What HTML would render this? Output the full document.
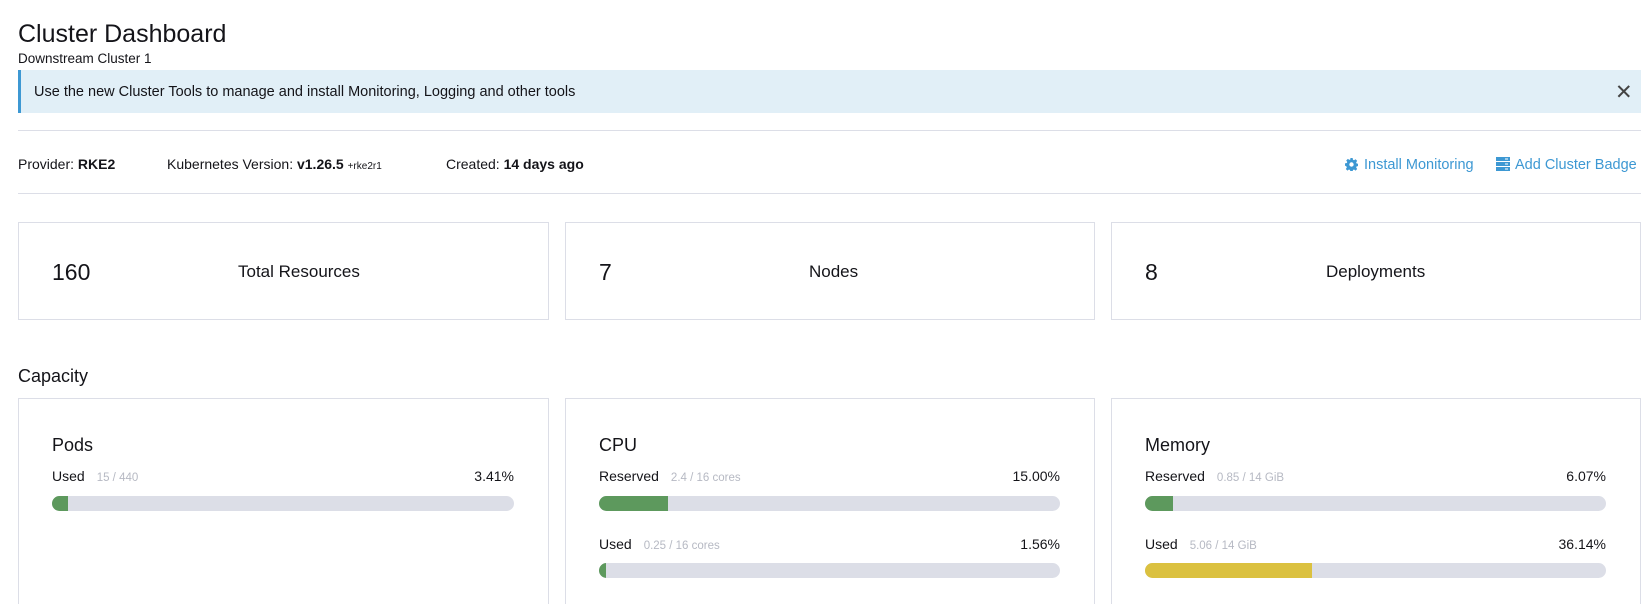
<!DOCTYPE html>
<html><head><meta charset="utf-8"><style>
*{box-sizing:border-box;margin:0;padding:0}
html,body{width:1645px;height:604px;overflow:hidden}
body{background:#fff;font-family:"Liberation Sans",sans-serif;color:#141419;position:relative}
.a{position:absolute;white-space:nowrap}
.card{position:absolute;border:1px solid #dcdee7;background:#fff}
.cap{height:206px;border-bottom:none}
.bar{position:absolute;height:15px;border-radius:8px;background:#dcdee7;overflow:hidden}
.bar i{position:absolute;left:0;top:0;bottom:0;background:#5d995d}
.lbl{font-size:14px;color:#141419}
.sub{font-size:11.5px;color:#b6b9c3;margin-left:12px}
.pct{font-size:14px;text-align:right}
.blue{color:#3d98d3}
</style></head><body>
<div class="a" style="left:18px;top:20px;font-size:25px">Cluster Dashboard</div>
<div class="a" style="left:18px;top:51px;font-size:13.5px">Downstream Cluster 1</div>
<div class="a" style="left:18px;top:70px;width:1623px;height:43px;background:#e1eff7;border-left:3px solid #3d98d3"></div>
<div class="a" style="left:34px;top:84px;font-size:14.5px">Use the new Cluster Tools to manage and install Monitoring, Logging and other tools</div>
<div class="a" style="left:1615px;top:80px;font-size:21px;color:#444">✕</div>
<div class="a" style="left:18px;top:130px;width:1623px;height:1px;background:#dcdee7"></div>
<div class="a" style="left:18px;top:156px;font-size:14px">Provider: <b>RKE2</b></div>
<div class="a" style="left:167px;top:156px;font-size:14px">Kubernetes Version: <b>v1.26.5</b> <b style="font-size:10px;font-weight:normal">+rke2r1</b></div>
<div class="a" style="left:446px;top:156px;font-size:14px">Created: <b>14 days ago</b></div>
<svg class="a" style="left:1345px;top:158px" width="13" height="13" viewBox="0 0 16 16"><path fill="#3d98d3" d="M6.6 0h2.8l.4 2.2 1.3.6 1.9-1.3 2 2-1.3 1.9.6 1.3 2.2.4v2.8l-2.2.4-.6 1.3 1.3 1.9-2 2-1.9-1.3-1.3.6-.4 2.2H6.6l-.4-2.2-1.3-.6-1.9 1.3-2-2 1.3-1.9-.6-1.3L0 9.4V6.6l2.2-.4.6-1.3-1.3-1.9 2-2 1.9 1.3 1.3-.6zM8 5.3A2.7 2.7 0 1 0 8 10.7 2.7 2.7 0 1 0 8 5.3z"/></svg>
<div class="a blue" style="left:1364px;top:157px;font-size:14.5px">Install Monitoring</div>
<svg class="a" style="left:1496px;top:157px" width="14" height="14" viewBox="0 0 14 14"><rect x="0" y="0" width="14" height="4" fill="#3d98d3"/><rect x="0" y="5" width="14" height="4" fill="#3d98d3"/><rect x="0" y="10" width="14" height="4" fill="#3d98d3"/><rect x="9" y="1.5" width="3" height="1" fill="#fff"/><rect x="9" y="6.5" width="3" height="1" fill="#fff"/><rect x="9" y="11.5" width="3" height="1" fill="#fff"/></svg>
<div class="a blue" style="left:1515px;top:157px;font-size:14.5px">Add Cluster Badge</div>
<div class="a" style="left:18px;top:193px;width:1623px;height:1px;background:#dcdee7"></div>

<div class="card" style="left:18px;top:222px;width:531px;height:98px"></div>
<div class="a" style="left:52px;top:259px;font-size:23px">160</div>
<div class="a" style="left:238px;top:262px;font-size:17px">Total Resources</div>
<div class="card" style="left:565px;top:222px;width:530px;height:98px"></div>
<div class="a" style="left:599px;top:259px;font-size:23px">7</div>
<div class="a" style="left:809px;top:262px;font-size:17px">Nodes</div>
<div class="card" style="left:1111px;top:222px;width:530px;height:98px"></div>
<div class="a" style="left:1145px;top:259px;font-size:23px">8</div>
<div class="a" style="left:1326px;top:262px;font-size:17px">Deployments</div>

<div class="a" style="left:18px;top:366px;font-size:18px">Capacity</div>
<div class="card cap" style="left:18px;top:398px;width:531px"></div>
<div class="card cap" style="left:565px;top:398px;width:530px"></div>
<div class="card cap" style="left:1111px;top:398px;width:530px"></div>

<div class="a" style="left:52px;top:435px;font-size:18px">Pods</div>
<div class="a lbl" style="left:52px;top:468px">Used<span class="sub">15 / 440</span></div>
<div class="a pct" style="left:414px;width:100px;top:468px">3.41%</div>
<div class="bar" style="left:52px;top:496px;width:462px"><i style="width:16px"></i></div>

<div class="a" style="left:599px;top:435px;font-size:18px">CPU</div>
<div class="a lbl" style="left:599px;top:468px">Reserved<span class="sub">2.4 / 16 cores</span></div>
<div class="a pct" style="left:960px;width:100px;top:468px">15.00%</div>
<div class="bar" style="left:599px;top:496px;width:461px"><i style="width:69px"></i></div>
<div class="a lbl" style="left:599px;top:536px">Used<span class="sub">0.25 / 16 cores</span></div>
<div class="a pct" style="left:960px;width:100px;top:536px">1.56%</div>
<div class="bar" style="left:599px;top:563px;width:461px"><i style="width:7px"></i></div>

<div class="a" style="left:1145px;top:435px;font-size:18px">Memory</div>
<div class="a lbl" style="left:1145px;top:468px">Reserved<span class="sub">0.85 / 14 GiB</span></div>
<div class="a pct" style="left:1506px;width:100px;top:468px">6.07%</div>
<div class="bar" style="left:1145px;top:496px;width:461px"><i style="width:28px"></i></div>
<div class="a lbl" style="left:1145px;top:536px">Used<span class="sub">5.06 / 14 GiB</span></div>
<div class="a pct" style="left:1506px;width:100px;top:536px">36.14%</div>
<div class="bar" style="left:1145px;top:563px;width:461px"><i style="width:167px;background:#dbc140"></i></div>
</body></html>
